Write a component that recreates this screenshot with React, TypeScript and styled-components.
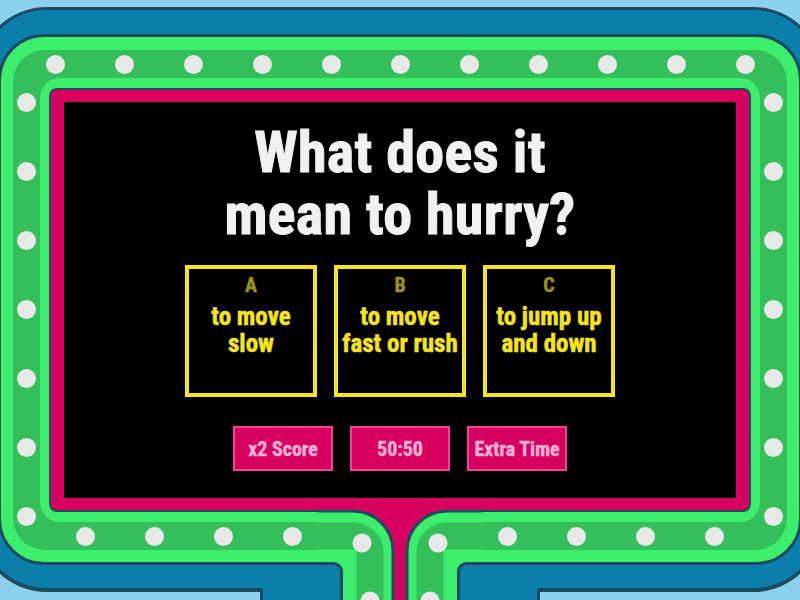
import React from 'react';
import styled, { createGlobalStyle } from 'styled-components';

const C = {
  sky: '#8cd0ef',
  ink: '#1d4a5e',
  blue: '#0b7eab',
  bright: '#3cee6b',
  mid: '#34bf5b',
  magenta: '#d8005f',
  bulb: '#e8e8e8',
  yellow: '#f6e51c',
  olive: '#9c9316',
};

const FONT = `"Roboto Condensed", "Liberation Sans", sans-serif`;

const ANSWERS = [
  { letter: 'A', text: ['to move', 'slow'] },
  { letter: 'B', text: ['to move', 'fast or rush'] },
  { letter: 'C', text: ['to jump up', 'and down'] },
];

const LIFELINES = ['x2 Score', '50:50', 'Extra Time'];

const GlobalStyle = createGlobalStyle`
  html, body {
    margin: 0;
    padding: 0;
    background: ${C.sky};
  }
  body {
    font-family: ${FONT};
  }
`;

const Page = styled.div`
  position: relative;
  width: 800px;
  height: 600px;
  overflow: hidden;
  background: ${C.sky};
  padding-top: 7px;
  box-sizing: border-box;
`;

const Rim = styled.div`
  box-sizing: border-box;
  width: 846px;
  height: 585px;
  margin: 0 -23px;
  padding: 24px 18px 23px;
  background: ${C.blue};
  border: 3px solid ${C.ink};
  border-bottom-width: 4px;
  border-radius: 70px;
`;

const GreenRing = styled.div`
  box-sizing: border-box;
  width: 804px;
  height: 531px;
  padding: 13px 12px 12px;
  background: ${C.bright};
  border: 3px solid ${C.ink};
  border-radius: 46px;
`;

const Band = styled.div`
  height: 100%;
  display: grid;
  grid-template-columns: 27px 1fr 27px;
  grid-template-rows: 28px 1fr 28px;
  background: ${C.mid};
  border-radius: 32px;
`;

const Bulb = styled.span`
  display: block;
  width: 19px;
  height: 19px;
  border-radius: 50%;
  background: ${C.bulb};
  flex: none;
`;

const TopTrack = styled.div`
  grid-row: 1;
  grid-column: 1 / -1;
  display: flex;
  align-items: center;
  justify-content: space-between;
  padding: 0 32px 0 33px;
`;

const SideTrack = styled.div<{ $side: 'left' | 'right' }>`
  grid-row: 1 / -1;
  grid-column: ${(p) => (p.$side === 'left' ? 1 : 3)};
  display: flex;
  flex-direction: column;
  align-items: center;
  justify-content: space-between;
  padding: 43px 0 24px;
`;

const BottomTrack = styled.div`
  grid-row: 3;
  grid-column: 1 / -1;
  display: flex;
  align-items: center;
  justify-content: space-between;
  padding: 0 63px;
`;

const BulbGroup = styled.div`
  display: flex;
  gap: 50px;
`;

const InnerGlow = styled.div`
  grid-row: 2;
  grid-column: 2;
  display: flex;
  padding: 12px 11px;
  background: ${C.bright};
  border-radius: 20px;
`;

const Screen = styled.div`
  flex: 1;
  display: flex;
  flex-direction: column;
  align-items: center;
  padding-top: 19px;
  background: #000;
  border-style: solid;
  border-color: ${C.magenta};
  border-width: 12px 13px;
  border-radius: 6px;
  box-shadow: 0 0 0 2px ${C.ink};
`;

const Question = styled.h1`
  margin: 0;
  font-family: ${FONT};
  font-weight: 700;
  font-size: 58px;
  line-height: 62px;
  letter-spacing: 0.3px;
  color: #f1f1f1;
  -webkit-text-stroke: 1px #f1f1f1;
  text-align: center;
  white-space: nowrap;
`;

const Answers = styled.div`
  display: flex;
  gap: 17px;
  margin-top: 20px;
`;

const AnswerBox = styled.div`
  box-sizing: border-box;
  width: 132px;
  height: 132px;
  padding-top: 5px;
  display: flex;
  flex-direction: column;
  align-items: center;
  border: 4px solid ${C.yellow};
  text-align: center;
`;

const Letter = styled.div`
  font-weight: 700;
  font-size: 20px;
  line-height: 22px;
  color: ${C.olive};
  -webkit-text-stroke: 0.4px ${C.olive};
`;

const AnswerText = styled.div`
  margin-top: 7px;
  font-weight: 700;
  font-size: 25px;
  line-height: 27px;
  color: ${C.yellow};
  -webkit-text-stroke: 0.5px ${C.yellow};
  white-space: nowrap;
`;

const Lifelines = styled.div`
  display: flex;
  gap: 17px;
  margin-top: 29px;
`;

const Lifeline = styled.button`
  box-sizing: border-box;
  width: 100px;
  height: 45px;
  padding: 0;
  background: ${C.magenta};
  border: 2px solid #f2459a;
  font-family: ${FONT};
  font-weight: 700;
  font-size: 20px;
  color: #ffb2d6;
  -webkit-text-stroke: 0.4px #ffb2d6;
  white-space: nowrap;
  cursor: pointer;
`;

const StandArt = styled.svg`
  position: absolute;
  left: 250px;
  top: 498px;
  width: 300px;
  height: 102px;
`;

const Post = () => (
  <g>
    <path
      fill={C.bright}
      d="M318 511 H353 A40 40 0 0 1 393 551 V600 H343 V573 A8 8 0 0 0 335 565 H318 Z"
    />
    <path fill="none" stroke={C.mid} strokeWidth={27} d="M318 536 H354 A16 16 0 0 1 370 552 V602" />
    <path fill="none" stroke={C.ink} strokeWidth={3} d="M318 511 H353 A40 40 0 0 1 393 551 V602" />
    <path fill="none" stroke={C.ink} strokeWidth={3} d="M318 563.5 H333.5 A8 8 0 0 1 341.5 571.5 V602" />
    <circle cx={362} cy={543} r={9.5} fill={C.bulb} />
    <circle cx={370} cy={601} r={9.5} fill={C.bulb} />
  </g>
);

const Stand = () => (
  <StandArt viewBox="250 498 300 102" aria-hidden>
    <rect x={262} y={566} width={276} height={40} fill={C.blue} />
    <path fill="none" stroke={C.ink} strokeWidth={3} d="M250 589.5 H260 Q261.5 589.5 261.5 591 V602" />
    <path fill="none" stroke={C.ink} strokeWidth={3} d="M550 589.5 H540 Q538.5 589.5 538.5 591 V602" />
    <rect x={350} y={505} width={100} height={100} fill={C.magenta} />
    <Post />
    <g transform="translate(800 0) scale(-1 1)">
      <Post />
    </g>
  </StandArt>
);

const bulbs = (n: number) => Array.from({ length: n }, (_, i) => <Bulb key={i} />);

export default function App() {
  return (
    <>
      <GlobalStyle />
      <Page>
        <Rim>
          <GreenRing>
            <Band>
              <TopTrack>{bulbs(11)}</TopTrack>
              <SideTrack $side="left">{bulbs(7)}</SideTrack>
              <SideTrack $side="right">{bulbs(7)}</SideTrack>
              <BottomTrack>
                <BulbGroup>{bulbs(4)}</BulbGroup>
                <BulbGroup>{bulbs(4)}</BulbGroup>
              </BottomTrack>
              <InnerGlow>
                <Screen>
                  <Question>
                    What does it
                    <br />
                    mean to hurry?
                  </Question>
                  <Answers>
                    {ANSWERS.map((a) => (
                      <AnswerBox key={a.letter}>
                        <Letter>{a.letter}</Letter>
                        <AnswerText>
                          {a.text.map((line) => (
                            <div key={line}>{line}</div>
                          ))}
                        </AnswerText>
                      </AnswerBox>
                    ))}
                  </Answers>
                  <Lifelines>
                    {LIFELINES.map((l) => (
                      <Lifeline key={l}>{l}</Lifeline>
                    ))}
                  </Lifelines>
                </Screen>
              </InnerGlow>
            </Band>
          </GreenRing>
        </Rim>
        <Stand />
      </Page>
    </>
  );
}
